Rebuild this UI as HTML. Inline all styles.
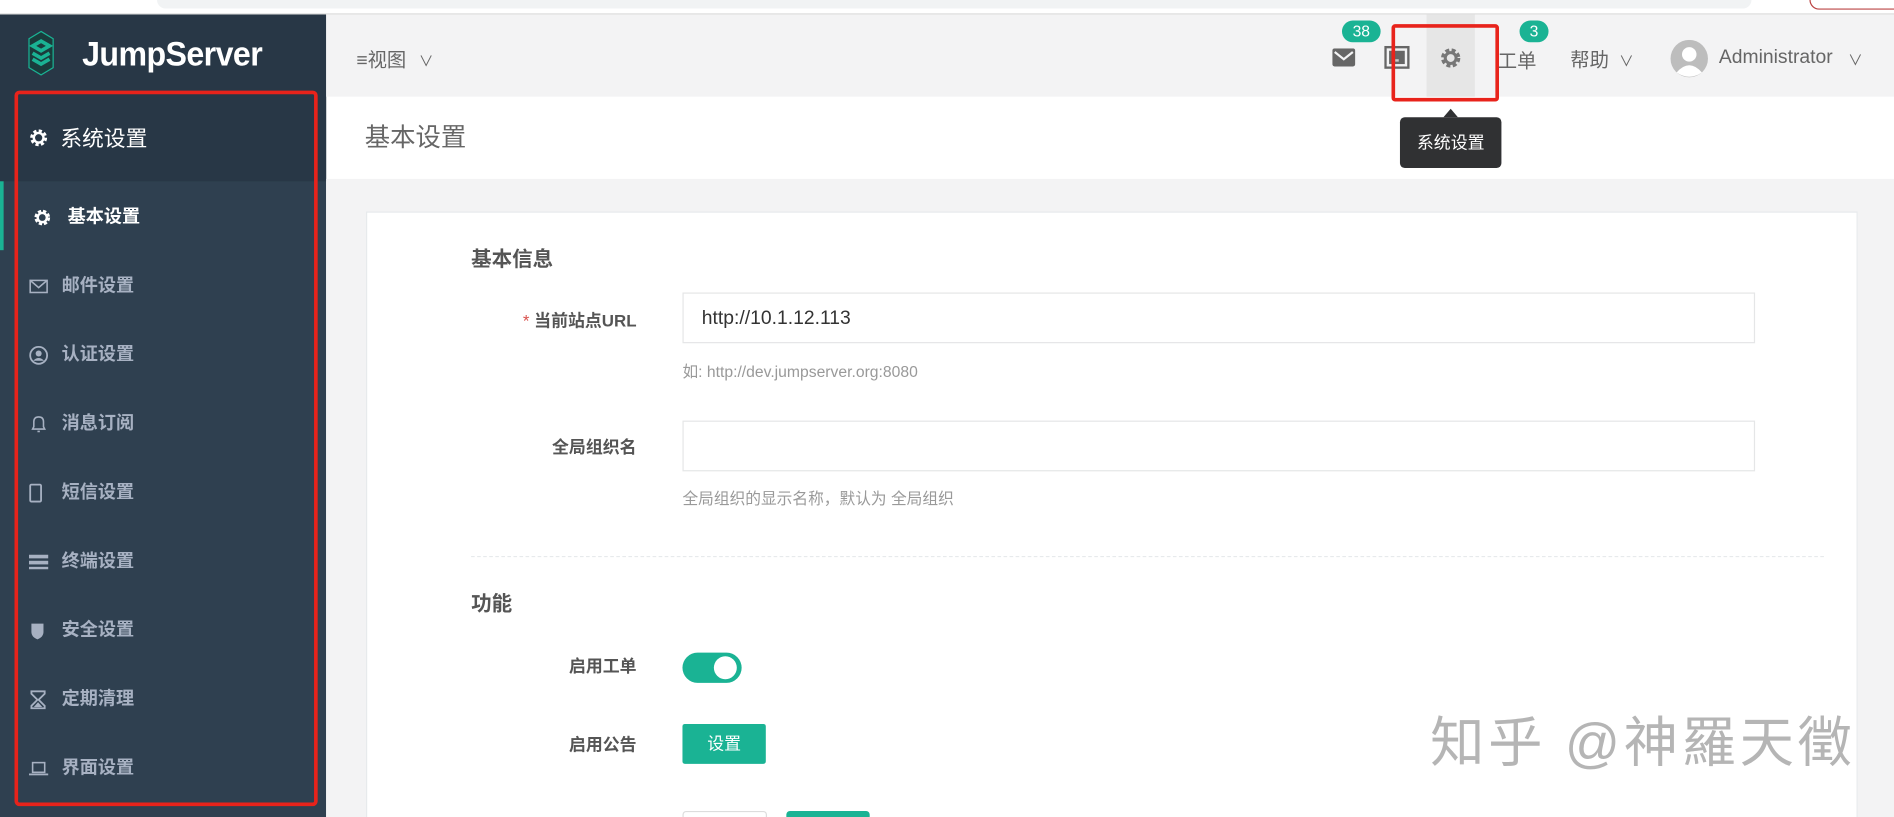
<!DOCTYPE html>
<html><head><meta charset="utf-8"><style>
html,body{margin:0;padding:0;width:1894px;height:817px;overflow:hidden;background:#fff}
#w{position:absolute;left:0;top:0;width:1568px;height:676px;transform:scale(1.2079,1.2086);transform-origin:0 0;font-family:"Liberation Sans","Noto Sans CJK SC",sans-serif;overflow:hidden}
.a{position:absolute}
.sb{left:0;top:12px;width:270px;height:664px;background:#2f4050}
.it{position:absolute;left:24px;font-size:15px;font-weight:bold;color:#a7b1c2;line-height:20px}
.it span{position:absolute;left:27px;top:0;white-space:nowrap}
.ic{position:absolute;left:0;top:2px;width:16px;height:16px}
.lbl{position:absolute;right:1041px;font-size:14px;font-weight:bold;color:#555;text-align:right;white-space:nowrap}
.inp{position:absolute;left:565px;width:886px;height:40px;border:1px solid #e5e6e7;background:#fff}
.hlp{position:absolute;left:565px;font-size:13px;color:#999}
.badge{position:absolute;background:#1ab394;color:#fff;font-size:13px;height:18px;line-height:18px;border-radius:9px;text-align:center;top:17px}
</style></head><body><div id="w">
<div class="a" style="left:130px;top:0;width:1320px;height:7px;background:#f1f3f4;border-radius:0 0 8px 8px"></div>
<div class="a" style="left:1498px;top:-8px;width:80px;height:14px;border:1px solid #b44;border-radius:8px"></div>
<div class="a" style="left:0;top:11px;width:1568px;height:1px;background:#ddd"></div>
<div class="a sb"></div>
<div class="a" style="left:0;top:12px;width:270px;height:138px;background:#283746"></div>
<svg class="a" style="left:23px;top:25px" width="22" height="38" viewBox="0 0 22 38"><polygon points="11,1 21,7 21,31 11,37 1,31 1,7" fill="#1a3c3c" stroke="#1ab394" stroke-width="1"/><path d="M4 13 L11 9 L18 13 L11 17 Z M4 19 L11 23 L18 19 M4 24 L11 28 L18 24" stroke="#1ab394" stroke-width="3" fill="none"/></svg>
<div class="a" style="left:68px;top:29px;font-size:28px;font-weight:bold;color:#fff;letter-spacing:-0.5px;transform:scaleX(0.95);transform-origin:0 0">JumpServer</div>
<svg class="a" style="left:24px;top:106px" width="16" height="16" viewBox="0 0 16 16"><circle cx="8" cy="8" r="5.5" fill="none" stroke="#fff" stroke-width="3" stroke-dasharray="2.5 1.8"/><circle cx="8" cy="8" r="4" fill="none" stroke="#fff" stroke-width="2"/></svg>
<div class="a" style="left:50px;top:101px;font-size:18px;color:#fff">系统设置</div>
<div class="a" style="left:0;top:150px;width:3px;height:57px;background:#1ab394"></div>
<div class="it" style="top:170px;left:27px;color:#fff"><svg class="ic" viewBox="0 0 16 16"><circle cx="8" cy="8" r="5" fill="none" stroke="#fff" stroke-width="3" stroke-dasharray="2.5 1.5"/><circle cx="8" cy="8" r="3.8" fill="none" stroke="#fff" stroke-width="2"/></svg><span style="left:29px">基本设置</span></div>
<div class="it" style="top:227px"><svg class="ic" viewBox="0 0 16 16"><rect x="1" y="3" width="14" height="10" fill="none" stroke="#a7b1c2" stroke-width="1.3"/><path d="M1 3 L8 9 L15 3" fill="none" stroke="#a7b1c2" stroke-width="1.3"/></svg><span>邮件设置</span></div>
<div class="it" style="top:284px"><svg class="ic" viewBox="0 0 16 16"><circle cx="8" cy="8" r="7" fill="none" stroke="#a7b1c2" stroke-width="1.5"/><circle cx="8" cy="6.5" r="2.5" fill="#a7b1c2"/><path d="M3.5 12.5 Q8 8 12.5 12.5" fill="#a7b1c2"/></svg><span>认证设置</span></div>
<div class="it" style="top:341px"><svg class="ic" viewBox="0 0 16 16"><path d="M3 12 L4 10 L4 6 Q4 2 8 2 Q12 2 12 6 L12 10 L13 12 Z M7 14 L9 14" fill="none" stroke="#a7b1c2" stroke-width="1.3"/></svg><span>消息订阅</span></div>
<div class="it" style="top:398px"><svg class="ic" viewBox="0 0 16 16"><rect x="1" y="1" width="9" height="14" rx="1" fill="none" stroke="#a7b1c2" stroke-width="1.5"/></svg><span>短信设置</span></div>
<div class="it" style="top:455px"><svg class="ic" viewBox="0 0 16 16"><rect x="0" y="2" width="16" height="3" fill="#a7b1c2"/><rect x="0" y="7" width="16" height="3" fill="#a7b1c2"/><rect x="0" y="12" width="16" height="2" fill="#a7b1c2"/></svg><span>终端设置</span></div>
<div class="it" style="top:512px"><svg class="ic" viewBox="0 0 16 16"><path d="M2 2 L12 2 L12 9 Q12 13 7 15 Q2 13 2 9 Z" fill="#a7b1c2"/></svg><span>安全设置</span></div>
<div class="it" style="top:569px"><svg class="ic" viewBox="0 0 16 16"><path d="M2 1 L13 1 L13 3 L8 8 L13 13 L13 15 L2 15 L2 13 L7 8 L2 3 Z" fill="none" stroke="#a7b1c2" stroke-width="1.5"/><path d="M4 14 L7.5 10 L11 14 Z" fill="#a7b1c2"/></svg><span>定期清理</span></div>
<div class="it" style="top:626px"><svg class="ic" viewBox="0 0 16 16"><rect x="3" y="3" width="10" height="8" fill="none" stroke="#a7b1c2" stroke-width="1.3"/><rect x="0" y="12" width="16" height="1.5" fill="#a7b1c2"/></svg><span>界面设置</span></div>
<div class="a" style="left:12px;top:75px;width:245px;height:586px;border:3px solid #e8231b;border-radius:4px"></div>
<div class="a" style="left:270px;top:12px;width:1298px;height:68px;background:#f3f3f4"></div>
<div class="a" style="left:295px;top:36px;font-size:16px;color:#666">≡视图 <span style="font-size:12px;margin-left:6px">∨</span></div>
<svg class="a" style="left:1103px;top:40px" width="19" height="15" viewBox="0 0 19 15"><rect width="19" height="15" rx="2" fill="#666"/><path d="M2 3 L9.5 9 L17 3" stroke="#f3f3f4" stroke-width="1.8" fill="none"/></svg>
<div class="badge" style="left:1111px;width:32px">38</div>
<svg class="a" style="left:1146px;top:38px" width="21" height="19" viewBox="0 0 21 19"><rect x="1" y="1" width="19" height="17" fill="none" stroke="#666" stroke-width="2"/><rect x="4" y="4" width="13" height="11" fill="#666"/><rect x="9" y="11" width="3" height="2" fill="#ccc"/></svg>
<div class="a" style="left:1181px;top:12px;width:40px;height:68px;background:#e6e6e6"></div>
<svg class="a" style="left:1192px;top:39px" width="18" height="18" viewBox="0 0 18 18"><circle cx="9" cy="9" r="6" fill="none" stroke="#777" stroke-width="4" stroke-dasharray="3 1.8"/><circle cx="9" cy="9" r="4.5" fill="none" stroke="#777" stroke-width="2.5"/></svg>
<div class="a" style="left:1240px;top:37px;font-size:16px;color:#666">工单</div>
<div class="badge" style="left:1258px;width:24px">3</div>
<div class="a" style="left:1300px;top:36px;font-size:16px;color:#666">帮助 <span style="font-size:12px;margin-left:4px">∨</span></div>
<svg class="a" style="left:1383px;top:33px" width="31" height="31" viewBox="0 0 31 31"><circle cx="15.5" cy="15.5" r="15.5" fill="#bdbdbd"/><circle cx="15.5" cy="12" r="6" fill="#fff"/><path d="M5 27 Q15.5 15 26 27 Q15.5 34 5 27" fill="#fff"/></svg>
<div class="a" style="left:1423px;top:39px;font-size:16px;color:#666">Administrator</div>
<div class="a" style="left:1530px;top:41px;font-size:12px;color:#666">∨</div>
<div class="a" style="left:1152px;top:20px;width:83px;height:58px;border:3px solid #e8231b;border-radius:3px"></div>
<div class="a" style="left:1195px;top:90px;width:0;height:0;border-left:6px solid transparent;border-right:6px solid transparent;border-bottom:7px solid #303133"></div>
<div class="a" style="left:1159px;top:97px;width:84px;height:42px;background:#303133;border-radius:4px;color:#fff;font-size:14px;line-height:42px;text-align:center">系统设置</div>
<div class="a" style="left:302px;top:98px;font-size:21px;color:#666">基本设置</div>
<div class="a" style="left:270px;top:148px;width:1298px;height:528px;background:#f3f3f4"></div>
<div class="a" style="left:303px;top:175px;width:1233px;height:510px;background:#fff;border:1px solid #e7eaec"></div>
<div class="a" style="left:390px;top:200px;font-size:17px;font-weight:bold;color:#555">基本信息</div>
<div class="lbl" style="top:255px"><span style="color:#d9534f;font-weight:normal">*</span> 当前站点URL</div>
<div class="inp" style="top:242px"></div>
<div class="a" style="left:581px;top:255px;font-size:16px;color:#333">http://10.1.12.113</div>
<div class="hlp" style="top:297px">如: http://dev.jumpserver.org:8080</div>
<div class="lbl" style="top:360px">全局组织名</div>
<div class="inp" style="top:348px"></div>
<div class="hlp" style="top:402px">全局组织的显示名称，默认为 全局组织</div>
<div class="a" style="left:390px;top:460px;width:1120px;border-top:1px dashed #e7eaec"></div>
<div class="a" style="left:390px;top:485px;font-size:17px;font-weight:bold;color:#555">功能</div>
<div class="lbl" style="top:541px">启用工单</div>
<div class="a" style="left:565px;top:540px;width:49px;height:25px;border-radius:13px;background:#1ab394"></div>
<div class="a" style="left:591px;top:543px;width:19px;height:19px;border-radius:50%;background:#fff"></div>
<div class="lbl" style="top:606px">启用公告</div>
<div class="a" style="left:565px;top:599px;width:69px;height:33px;background:#1ab394;border-radius:2px;color:#fff;font-size:14px;line-height:33px;text-align:center">设置</div>
<div class="a" style="left:565px;top:671px;width:68px;height:20px;border:1px solid #ddd;border-radius:3px;background:#fff"></div>
<div class="a" style="left:651px;top:671px;width:69px;height:20px;background:#1ab394;border-radius:3px"></div>
<div class="a" style="left:1184px;top:578px;font-size:45px;color:#b5b5b5;letter-spacing:3px;white-space:nowrap;text-shadow:1px 1px 0 #fff">知乎 @神羅天徵</div>
</div></body></html>
